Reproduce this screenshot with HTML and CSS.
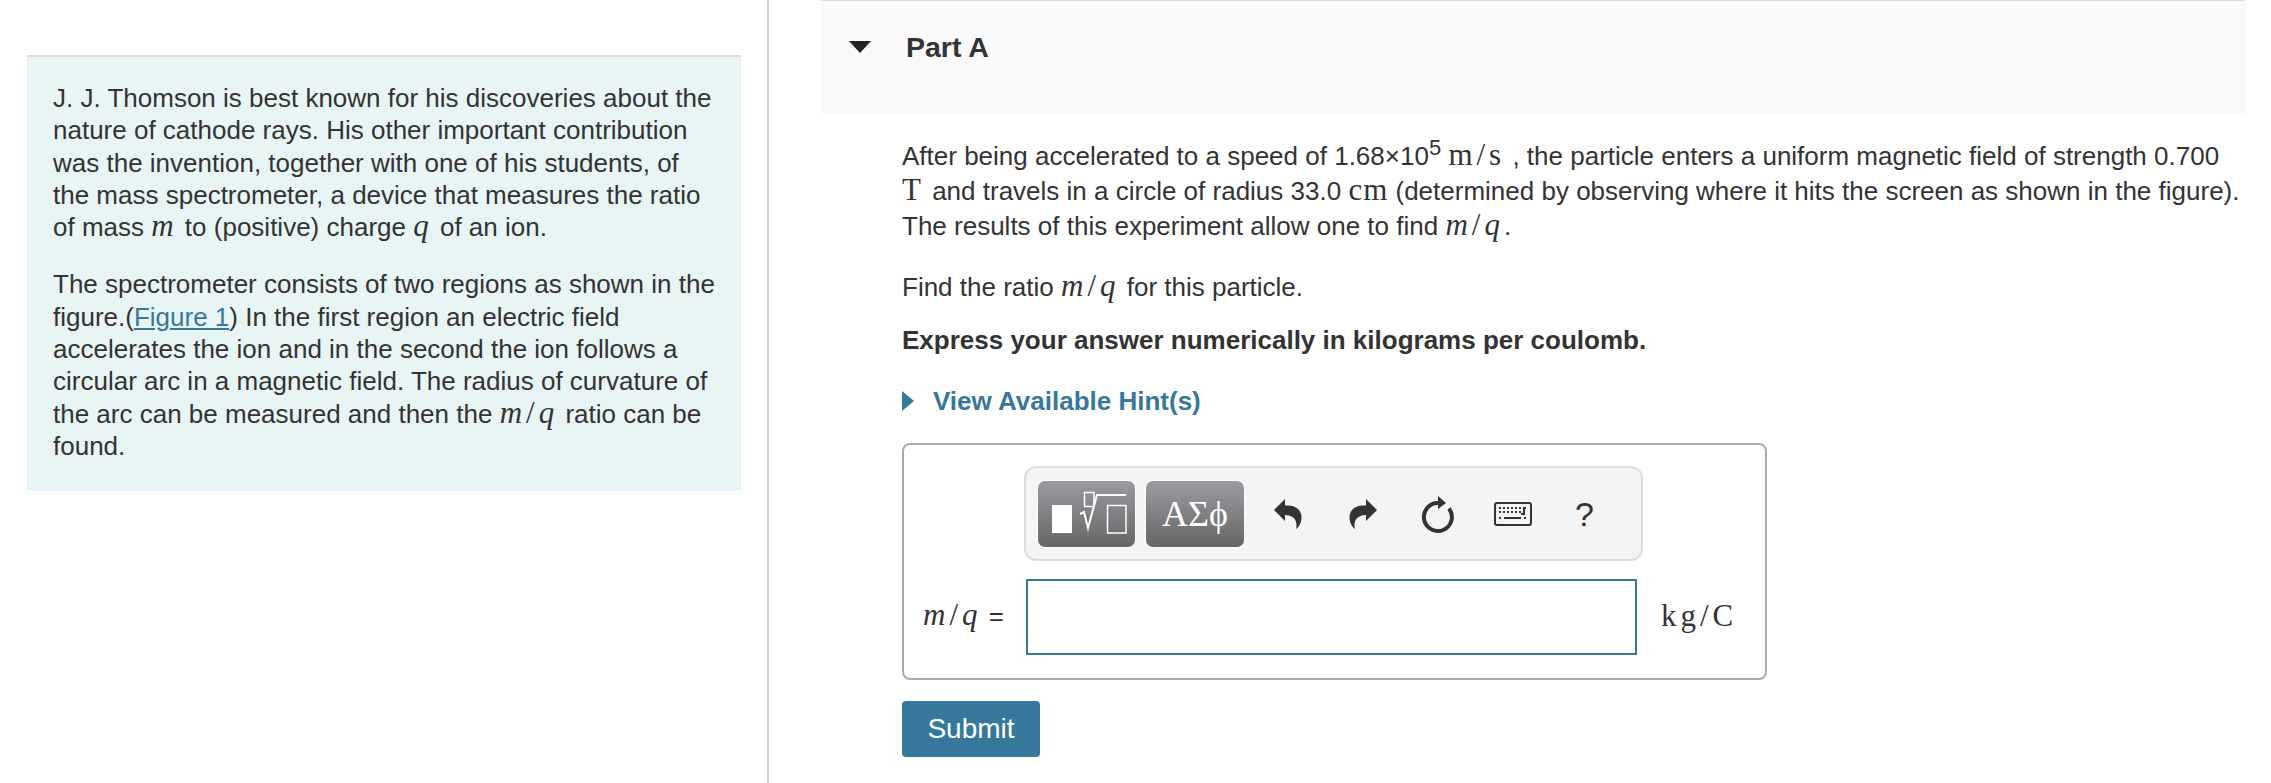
FILE: index.html
```html
<!DOCTYPE html>
<html lang="en">
<head>
<meta charset="UTF-8" />
<meta name="viewport" content="width=device-width, initial-scale=1" />
<title>Part A</title>
<link rel="stylesheet" href="styles.css">
</head>
<body>

<div class="intro">
  <div class="intro-box">
    <p>J. J. Thomson is best known for his discoveries about the nature of cathode rays. His other important contribution was the invention, together with one of his students, of the mass spectrometer, a device that measures the ratio of mass <i class="math">m</i> to (positive) charge <i class="math">q</i> of an ion.</p>
    <p>The spectrometer consists of two regions as shown in the figure.(<a href="#">Figure 1</a>) In the first region an electric field accelerates the ion and in the second the ion follows a circular arc in a magnetic field. The radius of curvature of the arc can be measured and then the <span class="math"><i>m</i>/<i>q</i></span> ratio can be found.</p>
  </div>
</div>

<div class="main">
  <div class="part-head">
    <span class="arrow-down"></span>
    <h2>Part A</h2>
  </div>

  <div class="part-body">
    <p class="lead">After being accelerated to a speed of 1.68×10<sup>5</sup> <span class="unit">m/s</span> , the particle enters a uniform magnetic field of strength 0.700<br><span class="unit">T</span> and travels in a circle of radius 33.0 <span class="unit tight">cm</span> (determined by observing where it hits the screen as shown in the figure).<br>The results of this experiment allow one to find <span class="math"><i>m</i>/<i>q</i></span>.</p>
    <p class="find">Find the ratio <span class="math"><i>m</i>/<i>q</i></span> for this particle.</p>
    <p class="express">Express your answer numerically in kilograms per coulomb.</p>
    <div class="hint"><span class="arrow-right"></span>View Available Hint(s)</div>

    <div class="answer">
      <div class="toolbar">
        <button class="tool-btn">
          <svg width="97" height="66" viewBox="0 0 97 66">
            <rect x="14" y="24" width="20" height="28" fill="#fff"/>
            <rect x="46.5" y="11.5" width="9.5" height="14" fill="none" stroke="#fff" stroke-width="1.5"/>
            <polyline points="42,33 46,31 50,47 59,14 88,14" fill="none" stroke="#fff" stroke-width="2"/>
            <rect x="69.5" y="24.5" width="18.5" height="27.5" fill="none" stroke="#fff" stroke-width="1.5"/>
          </svg>
        </button>
        <button class="tool-btn greek">ΑΣϕ</button>

        <span class="tool tool-first">
          <svg width="28" height="34" viewBox="0 0 28 34"><path d="M0 13 L11 2 V8.5 C20 8 28 11 27.5 22 C27 26 25 30 22 32 C24 24 20 18 11 18 V24 Z" fill="#333"/></svg>
        </span>
        <span class="tool">
          <svg class="flip" width="28" height="34" viewBox="0 0 28 34"><path d="M0 13 L11 2 V8.5 C20 8 28 11 27.5 22 C27 26 25 30 22 32 C24 24 20 18 11 18 V24 Z" fill="#333"/></svg>
        </span>
        <span class="tool">
          <svg width="36" height="40" viewBox="0 0 36 40">
            <path d="M18 9 A14 14 0 1 0 29 14.5" fill="none" stroke="#333" stroke-width="4"/>
            <polygon points="18,2 26,9 18,15" fill="#333"/>
          </svg>
        </span>
        <span class="tool">
          <svg width="38" height="24" viewBox="0 0 38 24">
            <rect x="1" y="1" width="36" height="22" rx="2" fill="none" stroke="#333" stroke-width="2"/>
            <path d="M5 6h2M9 6h2M13 6h2M17 6h2M21 6h2M25 6h2M29 6h3M5 10h2M9 10h2M13 10h2M17 10h2M21 10h2M25 10h2M30 6v6h-3M5 16h2M10 16h17M30 16h2" stroke="#333" stroke-width="2" fill="none"/>
          </svg>
        </span>
        <span class="tool help">?</span>
      </div>

      <div class="answer-row">
        <label class="answer-label"><span class="math"><i>m</i>/<i>q</i></span> =</label>
        <input class="answer-input" type="text">
        <span class="units unit">kg/C</span>
      </div>
    </div>

    <button class="submit">Submit</button>
  </div>
</div>

</body>
</html>
```

FILE: styles.css
```css
html, body {
  margin: 0;
  padding: 0;
}
body {
  display: flex;
  min-height: 100vh;
  font-family: "Liberation Sans", Arial, sans-serif;
  font-size: 26px;
  color: #333;
  background: white;
}
p {
  margin: 0;
}
.math, .unit {
  font-family: "Liberation Serif", "Times New Roman", serif;
  font-size: 31px;
  line-height: 0;
}
.math {
  letter-spacing: 4px;
}
.unit {
  letter-spacing: 4px;
}
.unit.tight {
  letter-spacing: 1px;
}
.intro {
  width: 769px;
  box-sizing: border-box;
  padding: 55px 26px 0 27px;
  border-right: 2px solid #c4d5e6;
}
.intro-box {
  height: 436px;
  box-sizing: border-box;
  padding: 25px 20px 0 26px;
  background: #e8f5f5;
  border-top: 2px solid #dddddd;
  line-height: 32.3px;
}
.intro-box p {
  margin-bottom: 25px;
}
.intro-box a {
  color: #36789b;
}
.main {
  flex: 1;
  padding-left: 52px;
  padding-right: 26px;
}
.part-head {
  display: flex;
  align-items: flex-start;
  height: 113px;
  background: #f9f9f9;
  border-top: 1px solid #dddddd;
}
.part-head h2 {
  margin: 30px 0 0 35px;
  font-size: 28.5px;
  line-height: 32px;
}
.arrow-down {
  width: 0;
  height: 0;
  margin: 40px 0 0 28px;
  border-left: 11px solid transparent;
  border-right: 11px solid transparent;
  border-top: 12px solid #222;
}
.part-body {
  padding: 25px 0 0 81px;
}
.lead {
  line-height: 34.8px;
  margin-right: -6px;
}
.lead sup {
  font-size: 22px;
  line-height: 0;
}
.find {
  margin-top: 27px;
  line-height: 34px;
}
.express {
  margin-top: 19px;
  font-weight: bold;
  line-height: 34px;
}
.hint {
  display: flex;
  align-items: center;
  margin-top: 27px;
  font-weight: bold;
  color: #36789b;
  line-height: 34px;
}
.arrow-right {
  width: 0;
  height: 0;
  margin-right: 19px;
  border-top: 10px solid transparent;
  border-bottom: 10px solid transparent;
  border-left: 12px solid #36789b;
}
.answer {
  width: 865px;
  height: 237px;
  box-sizing: border-box;
  margin-top: 25px;
  padding-top: 21px;
  border: 2px solid #aaaaaa;
  border-radius: 8px;
}
.toolbar {
  display: flex;
  align-items: center;
  width: 619px;
  height: 95px;
  box-sizing: border-box;
  margin-left: 120px;
  padding-left: 12px;
  background: #f4f4f4;
  border: 2px solid #dddddd;
  border-radius: 12px;
}
.tool-btn {
  width: 97px;
  height: 66px;
  padding: 0;
  border: none;
  border-radius: 7px;
  background: linear-gradient(#9b9aa2, #666666);
  box-shadow: 0 0 0 1px white;
  color: white;
}
.tool-btn svg {
  display: block;
}
.greek {
  margin-left: 11px;
  width: 98px;
  font-family: "Liberation Serif", serif;
  font-size: 36px;
}
.tool {
  display: flex;
  justify-content: center;
  width: 75px;
}
.tool-first {
  margin-left: 6px;
}
.flip {
  transform: scaleX(-1);
}
.help {
  margin-left: -3px;
  font-size: 34px;
  line-height: 40px;
}
.answer-row {
  display: flex;
  align-items: center;
  margin-top: 18px;
  padding-left: 19px;
}
.answer-label {
  width: 103px;
  margin-bottom: 1px;
  white-space: nowrap;
}
.answer-input {
  width: 611px;
  height: 76px;
  box-sizing: border-box;
  border: 2px solid #36789b;
  background: white;
}
.units {
  margin-left: 24px;
  margin-bottom: 3px;
  line-height: 1;
}
.submit {
  display: block;
  width: 138px;
  height: 56px;
  margin-top: 21px;
  padding: 0;
  border: none;
  border-radius: 4px;
  background: #36789b;
  color: white;
  font-family: "Liberation Sans", Arial, sans-serif;
  font-size: 28px;
}
```
